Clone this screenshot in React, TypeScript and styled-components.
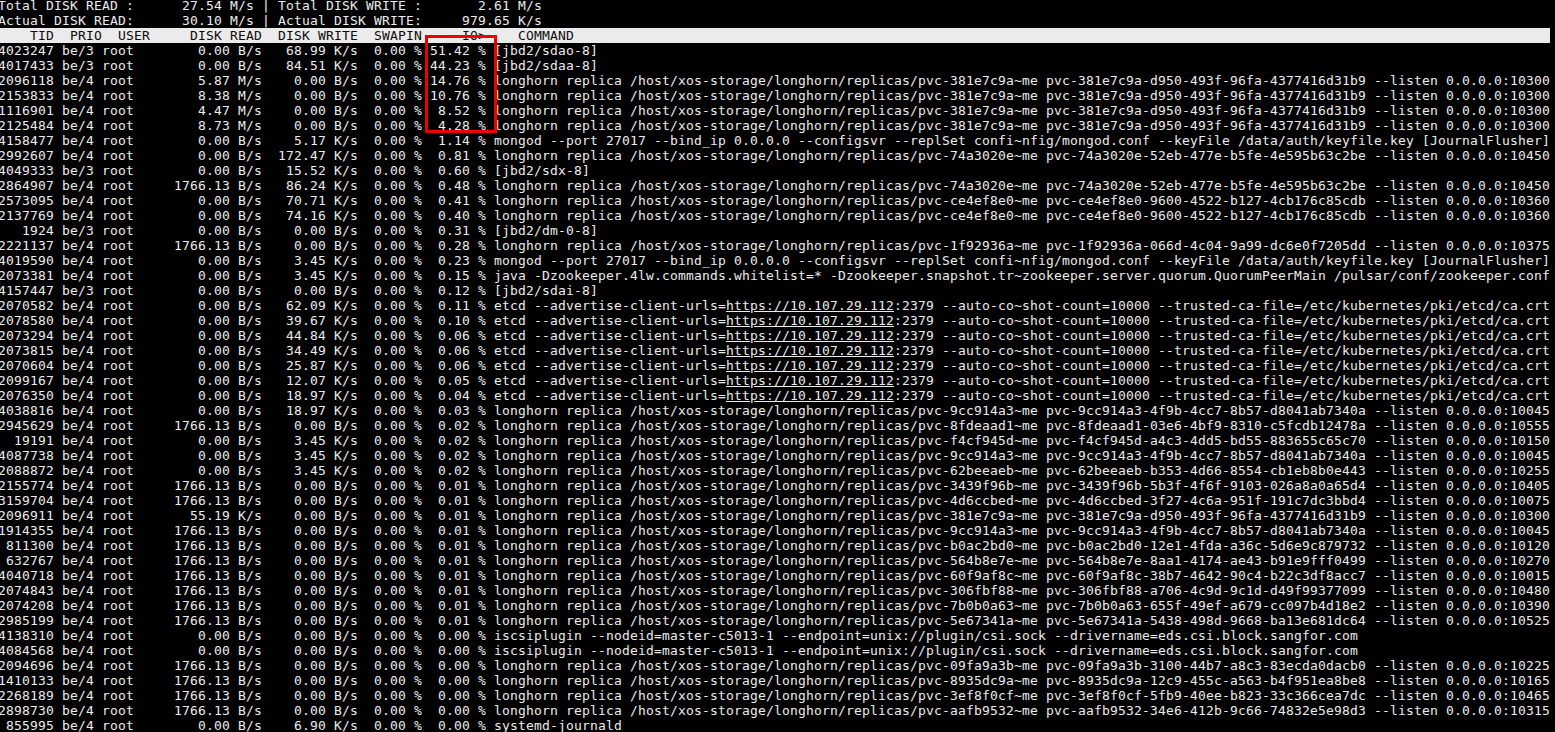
import styled, { createGlobalStyle } from 'styled-components'

type Row = [string, string, string, string, string, string]

const GlobalStyle = createGlobalStyle`
  html, body {
    margin: 0;
    height: 100%;
    background: #000;
    overflow: hidden;
  }
`

const replica = (id: string, rest: string, port: string) =>
  `longhorn replica /host/xos-storage/longhorn/replicas/pvc-${id}~me pvc-${id}-${rest} --listen 0.0.0.0:${port}`

const MONGOD =
  'mongod --port 27017 --bind_ip 0.0.0.0 --configsvr --replSet confi~nfig/mongod.conf --keyFile /data/auth/keyfile.key [JournalFlusher]'
const JAVA =
  'java -Dzookeeper.4lw.commands.whitelist=* -Dzookeeper.snapshot.tr~zookeeper.server.quorum.QuorumPeerMain /pulsar/conf/zookeeper.conf'
const ISCSI =
  'iscsiplugin --nodeid=master-c5013-1 --endpoint=unix://plugin/csi.sock --drivername=eds.csi.block.sangfor.com'
const ETCD_URL = 'https://10.107.29.112'
const ETCD = `etcd --advertise-client-urls=${ETCD_URL}:2379 --auto-co~shot-count=10000 --trusted-ca-file=/etc/kubernetes/pki/etcd/ca.crt`

const R381 = replica('381e7c9a', 'd950-493f-96fa-4377416d31b9', '10300')
const R74A = replica('74a3020e', '52eb-477e-b5fe-4e595b63c2be', '10450')
const RCE4 = replica('ce4ef8e0', '9600-4522-b127-4cb176c85cdb', '10360')
const R9CC = replica('9cc914a3', '4f9b-4cc7-8b57-d8041ab7340a', '10045')

const SLOW = '1766.13 B/s'
const ZERO = '0.00 B/s'

const rows: Row[] = [
  ['4023247', 'be/3', ZERO, '68.99 K/s', '51.42', '[jbd2/sdao-8]'],
  ['4017433', 'be/3', ZERO, '84.51 K/s', '44.23', '[jbd2/sdaa-8]'],
  ['2096118', 'be/4', '5.87 M/s', ZERO, '14.76', R381],
  ['2153833', 'be/4', '8.38 M/s', ZERO, '10.76', R381],
  ['1116901', 'be/4', '4.47 M/s', ZERO, '8.52', R381],
  ['2125484', 'be/4', '8.73 M/s', ZERO, '4.28', R381],
  ['4158477', 'be/4', ZERO, '5.17 K/s', '1.14', MONGOD],
  ['2992607', 'be/4', ZERO, '172.47 K/s', '0.81', R74A],
  ['4049333', 'be/3', ZERO, '15.52 K/s', '0.60', '[jbd2/sdx-8]'],
  ['2864907', 'be/4', SLOW, '86.24 K/s', '0.48', R74A],
  ['2573095', 'be/4', ZERO, '70.71 K/s', '0.41', RCE4],
  ['2137769', 'be/4', ZERO, '74.16 K/s', '0.40', RCE4],
  ['1924', 'be/3', ZERO, ZERO, '0.31', '[jbd2/dm-0-8]'],
  ['2221137', 'be/4', SLOW, ZERO, '0.28', replica('1f92936a', '066d-4c04-9a99-dc6e0f7205dd', '10375')],
  ['4019590', 'be/4', ZERO, '3.45 K/s', '0.23', MONGOD],
  ['2073381', 'be/4', ZERO, '3.45 K/s', '0.15', JAVA],
  ['4157447', 'be/3', ZERO, ZERO, '0.12', '[jbd2/sdai-8]'],
  ['2070582', 'be/4', ZERO, '62.09 K/s', '0.11', ETCD],
  ['2078580', 'be/4', ZERO, '39.67 K/s', '0.10', ETCD],
  ['2073294', 'be/4', ZERO, '44.84 K/s', '0.06', ETCD],
  ['2073815', 'be/4', ZERO, '34.49 K/s', '0.06', ETCD],
  ['2070604', 'be/4', ZERO, '25.87 K/s', '0.06', ETCD],
  ['2099167', 'be/4', ZERO, '12.07 K/s', '0.05', ETCD],
  ['2076350', 'be/4', ZERO, '18.97 K/s', '0.04', ETCD],
  ['4038816', 'be/4', ZERO, '18.97 K/s', '0.03', R9CC],
  ['2945629', 'be/4', SLOW, ZERO, '0.02', replica('8fdeaad1', '03e6-4bf9-8310-c5fcdb12478a', '10555')],
  ['19191', 'be/4', ZERO, '3.45 K/s', '0.02', replica('f4cf945d', 'a4c3-4dd5-bd55-883655c65c70', '10150')],
  ['4087738', 'be/4', ZERO, '3.45 K/s', '0.02', R9CC],
  ['2088872', 'be/4', ZERO, '3.45 K/s', '0.02', replica('62beeaeb', 'b353-4d66-8554-cb1eb8b0e443', '10255')],
  ['2155774', 'be/4', SLOW, ZERO, '0.01', replica('3439f96b', '5b3f-4f6f-9103-026a8a0a65d4', '10405')],
  ['3159704', 'be/4', SLOW, ZERO, '0.01', replica('4d6ccbed', '3f27-4c6a-951f-191c7dc3bbd4', '10075')],
  ['2096911', 'be/4', '55.19 K/s', ZERO, '0.01', R381],
  ['1914355', 'be/4', SLOW, ZERO, '0.01', R9CC],
  ['811300', 'be/4', SLOW, ZERO, '0.01', replica('b0ac2bd0', '12e1-4fda-a36c-5d6e9c879732', '10120')],
  ['632767', 'be/4', SLOW, ZERO, '0.01', replica('564b8e7e', '8aa1-4174-ae43-b91e9fff0499', '10270')],
  ['4040718', 'be/4', SLOW, ZERO, '0.01', replica('60f9af8c', '38b7-4642-90c4-b22c3df8acc7', '10015')],
  ['2074843', 'be/4', SLOW, ZERO, '0.01', replica('306fbf88', 'a706-4c9d-9c1d-d49f99377099', '10480')],
  ['2074208', 'be/4', SLOW, ZERO, '0.01', replica('7b0b0a63', '655f-49ef-a679-cc097b4d18e2', '10390')],
  ['2985199', 'be/4', SLOW, ZERO, '0.01', replica('5e67341a', '5438-498d-9668-ba13e681dc64', '10525')],
  ['4138310', 'be/4', ZERO, ZERO, '0.00', ISCSI],
  ['4084568', 'be/4', ZERO, ZERO, '0.00', ISCSI],
  ['2094696', 'be/4', SLOW, ZERO, '0.00', replica('09fa9a3b', '3100-44b7-a8c3-83ecda0dacb0', '10225')],
  ['1410133', 'be/4', SLOW, ZERO, '0.00', replica('8935dc9a', '12c9-455c-a563-b4f951ea8be8', '10165')],
  ['2268189', 'be/4', SLOW, ZERO, '0.00', replica('3ef8f0cf', '5fb9-40ee-b823-33c366cea7dc', '10465')],
  ['2898730', 'be/4', SLOW, ZERO, '0.00', replica('aafb9532', '34e6-412b-9c66-74832e5e98d3', '10315')],
  ['855995', 'be/4', ZERO, '6.90 K/s', '0.00', 'systemd-journald'],
]

// same column widths iotop prints
const prefix = ([tid, prio, read, write, io]: Row) =>
  `${tid.padStart(7)} ${prio} ${'root'.padEnd(8)} ${read.padStart(11)} ${write.padStart(11)} ${'0.00 %'.padStart(7)} ${`${io} %`.padStart(7)} `

function Command({ text }: { text: string }) {
  const at = text.indexOf(ETCD_URL)
  if (at < 0) return <>{text}</>
  return (
    <>
      {text.slice(0, at)}
      <Link>{ETCD_URL}</Link>
      {text.slice(at + ETCD_URL.length)}
    </>
  )
}

export default function App() {
  return (
    <>
      <GlobalStyle />
      <Screen>
        <Line>Total DISK READ :      27.54 M/s | Total DISK WRITE :       2.61 M/s</Line>
        <Line>Actual DISK READ:      30.10 M/s | Actual DISK WRITE:     979.65 K/s</Line>
        <HeaderLine>    TID  PRIO  USER     DISK READ  DISK WRITE  SWAPIN     IO{'>'}    COMMAND</HeaderLine>
        {rows.map((row) => (
          <Line key={row[0]}>
            {prefix(row)}
            <Command text={row[5]} />
          </Line>
        ))}
        <Highlight />
      </Screen>
    </>
  )
}

const Screen = styled.main`
  position: relative;
  width: 1552px;
  margin: -2px 0 0 -2px;
  background: #000;
  color: #ececec;
  font-family: 'DejaVu Sans Mono', monospace;
  font-size: 13px;
  letter-spacing: 0.173px;
`

const Line = styled.div`
  height: 15px;
  line-height: 15px;
  white-space: pre;
`

const HeaderLine = styled(Line)`
  background: #ebebeb;
  color: #0c0c0c;
`

const Link = styled.span`
  text-decoration: underline;
`

const Highlight = styled.div`
  position: absolute;
  top: 37px;
  left: 427px;
  width: 72px;
  height: 98px;
  box-sizing: border-box;
  border: 3px solid #ee0000;
`
